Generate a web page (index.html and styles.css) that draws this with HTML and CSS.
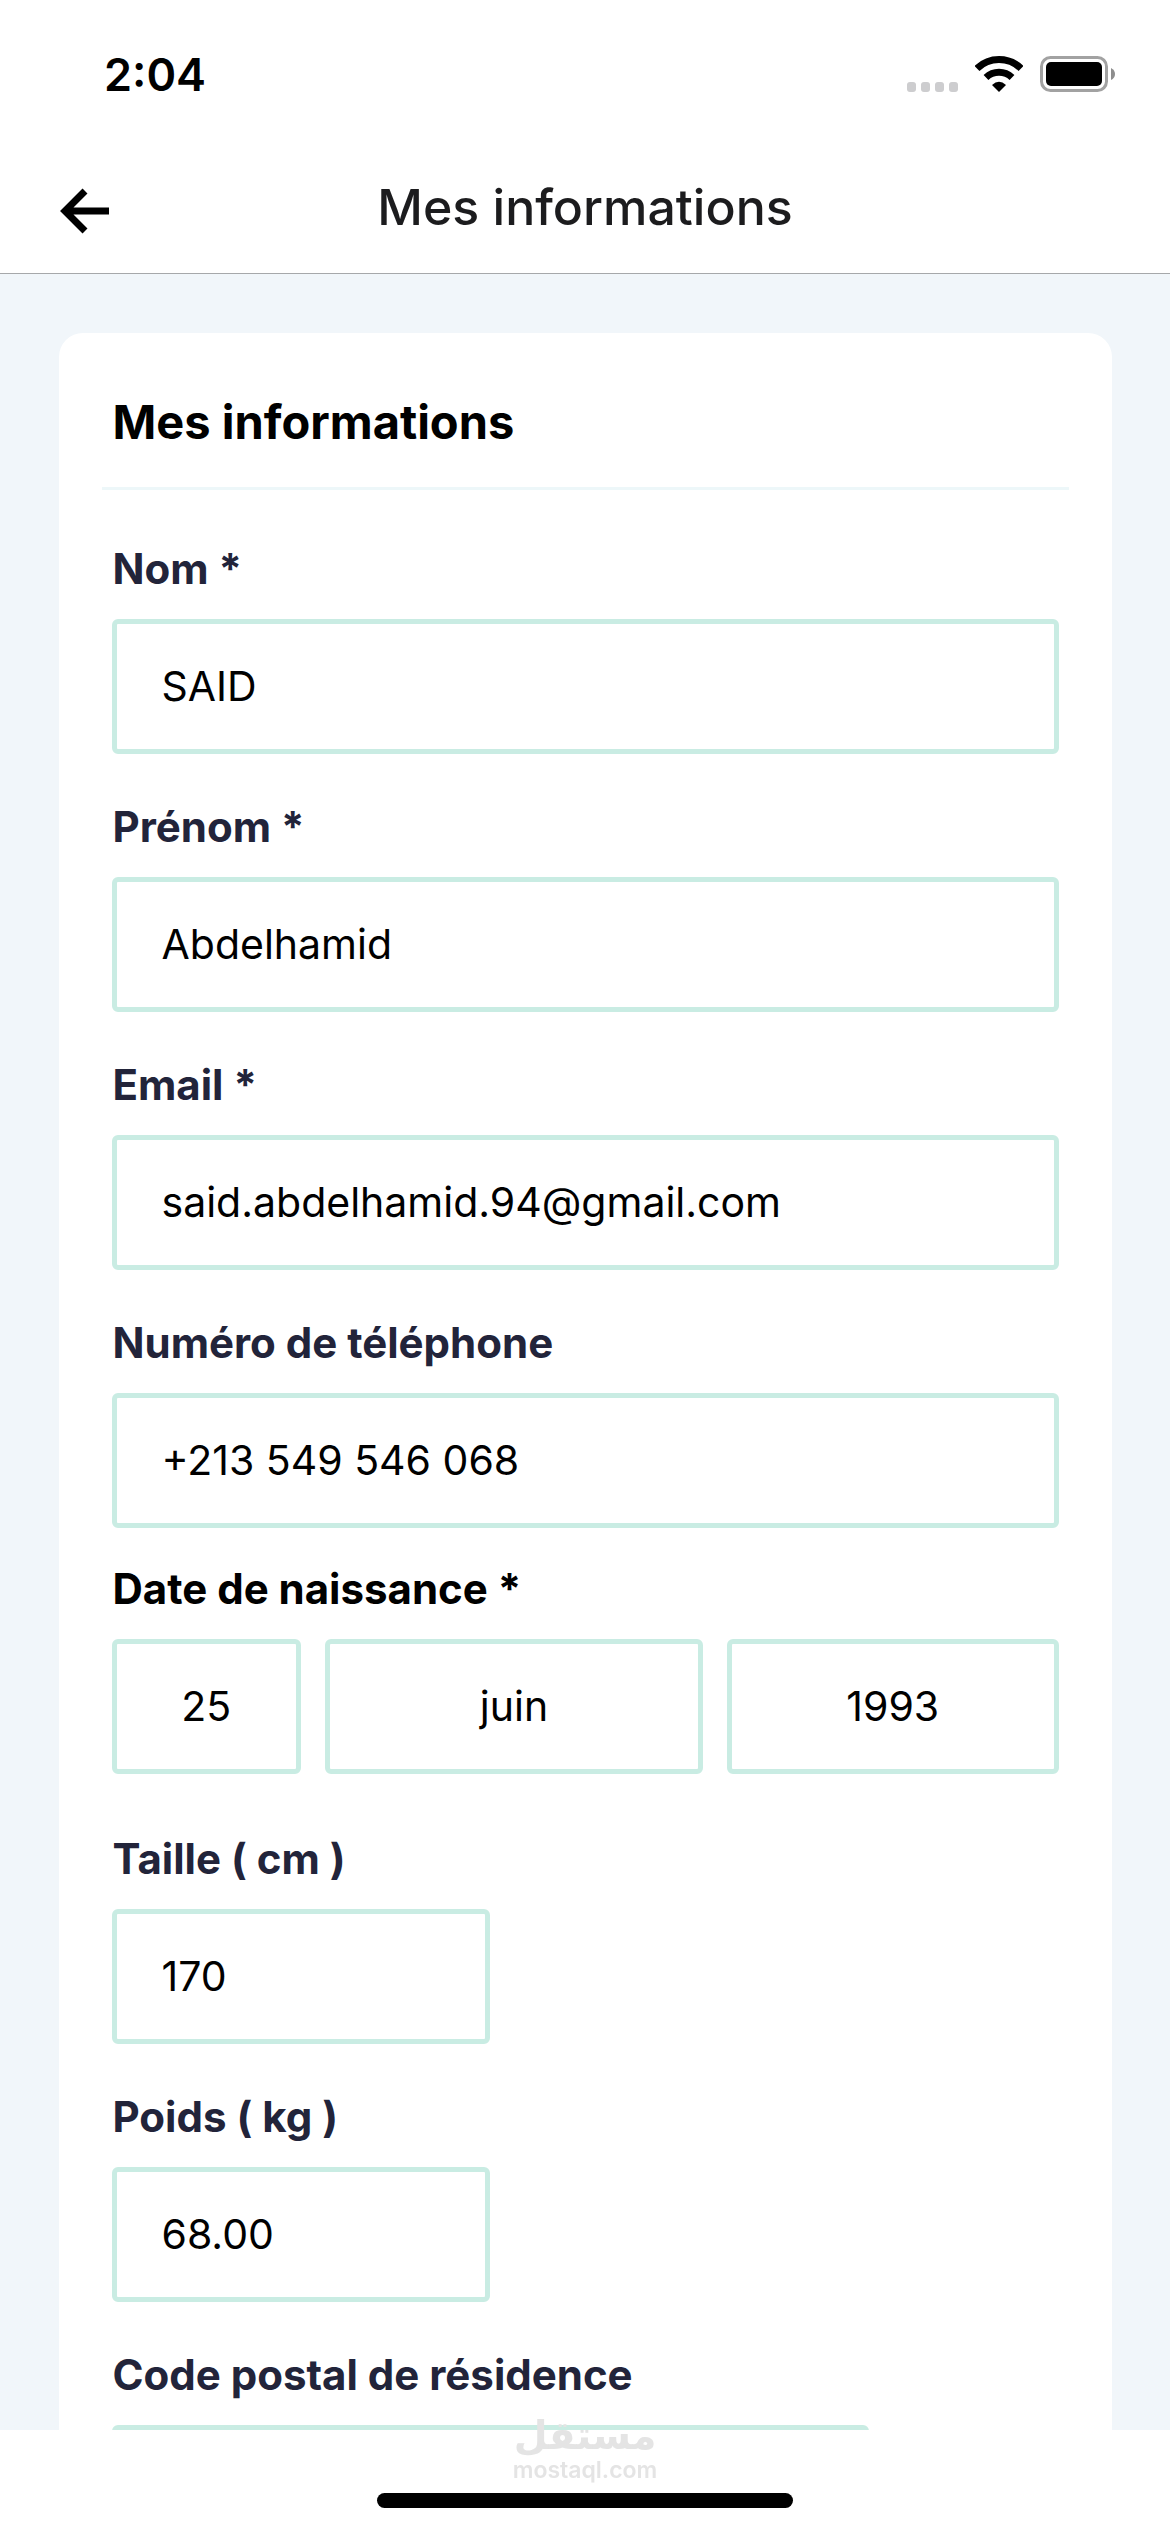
FILE: index.html
```html
<!DOCTYPE html>
<html lang="fr">
<head>
  <meta charset="UTF-8">
  <meta name="viewport" content="width=device-width, initial-scale=1.0">
  <title>Mes informations</title>
  <link rel="stylesheet" href="styles.css">
</head>
<body>

<!-- Status bar -->
<div class="status-bar">
  <span class="time">2:04</span>
  <div class="status-icons">
    <svg width="51" height="38" viewBox="0 0 51 38" fill="#cdcdcf">
      <rect x="0" y="27" width="9" height="10" rx="3"/>
      <rect x="14" y="27" width="9" height="10" rx="3"/>
      <rect x="28" y="27" width="9" height="10" rx="3"/>
      <rect x="42" y="27" width="9" height="10" rx="3"/>
    </svg>
    <svg width="48" height="38" viewBox="0 0 48 38">
      <path d="M2 13.500A31.500 31.500 0 0 1 46 13.500" fill="none" stroke="#000" stroke-width="7"/>
      <path d="M11 22.500A19 19 0 0 1 37 22.500" fill="none" stroke="#000" stroke-width="7"/>
      <path d="M24 37L17 30Q24 23.500 31 30Z"/>
    </svg>
    <svg width="75" height="38" viewBox="0 0 75 38">
      <rect x="1.500" y="2.500" width="65" height="33" rx="9" fill="none" stroke="#a2a2a2" stroke-width="3"/>
      <rect x="6" y="7" width="56" height="24" rx="5"/>
      <path d="M71 13Q75 15 75 19T71 25Z" fill="#8e8e8e"/>
    </svg>
  </div>
</div>

<!-- Header -->
<header class="header">
  <button class="back" type="button" aria-label="Retour">
    <svg width="49" height="46" viewBox="0 0 49 46" fill="none" stroke="#000" stroke-width="7">
      <path d="M49 23H6M25 3L5 23L25 43"/>
    </svg>
  </button>
  <h1>Mes informations</h1>
</header>

<!-- Form -->
<main class="content">
  <form class="card">
    <h2>Mes informations</h2>
    <div class="fields">
      <div class="field">
        <label for="nom">Nom *</label>
        <input type="text" id="nom" value="SAID">
      </div>
      <div class="field">
        <label for="prenom">Prénom *</label>
        <input type="text" id="prenom" value="Abdelhamid">
      </div>
      <div class="field">
        <label for="email">Email *</label>
        <input type="email" id="email" value="said.abdelhamid.94@gmail.com">
      </div>
      <div class="field">
        <label for="telephone">Numéro de téléphone</label>
        <input type="tel" id="telephone" value="+213 549 546 068">
      </div>
      <div class="field birth">
        <label for="jour">Date de naissance *</label>
        <div class="date">
          <select id="jour">
            <option>24</option>
            <option selected>25</option>
            <option>26</option>
          </select>
          <select id="mois" aria-label="Mois">
            <option>mai</option>
            <option selected>juin</option>
            <option>juillet</option>
          </select>
          <select id="annee" aria-label="Année">
            <option>1992</option>
            <option selected>1993</option>
            <option>1994</option>
          </select>
        </div>
      </div>
      <div class="field">
        <label for="taille">Taille ( cm )</label>
        <input type="text" id="taille" class="small" value="170">
      </div>
      <div class="field">
        <label for="poids">Poids ( kg )</label>
        <input type="text" id="poids" class="small" value="68.00">
      </div>
      <div class="field">
        <label for="code-postal">Code postal de résidence</label>
        <input type="text" id="code-postal" class="medium">
      </div>
    </div>
  </form>
</main>

<!-- Bottom area -->
<footer class="bottom">
  <div class="watermark">
    <span class="watermark-ar" lang="ar">مستقل</span>
    <span class="watermark-url">mostaql.com</span>
  </div>
  <div class="home-indicator"></div>
</footer>

</body>
</html>
```

FILE: styles.css
```css
* {
  box-sizing: border-box;
}

body {
  margin: 0;
  height: 100vh;
  display: flex;
  flex-direction: column;
  font-family: Inter, "Liberation Sans", sans-serif;
  font-size: 42px;
  color: #000;
  background-color: #fff;
}

h1, h2 {
  margin: 0;
}

/* Status bar */
.status-bar {
  flex: none;
  display: flex;
  justify-content: space-between;
  align-items: center;
  height: 148px;
  padding: 0 55px 0 104px;
}

.time {
  font-size: 45px;
  font-weight: 600;
}

.status-icons {
  display: flex;
  gap: 17px;
}

/* Header */
.header {
  flex: none;
  display: grid;
  grid-template-columns: 1fr auto 1fr;
  align-items: center;
  height: 126px;
  padding: 0 60px;
  border-bottom: 1px solid #a6a8aa;
}

.header h1 {
  padding-bottom: 8px;
  font-size: 50px;
  font-weight: 500;
  color: #1c1c1e;
}

.back {
  justify-self: start;
  display: flex;
  padding: 0;
  border: none;
  background: none;
  cursor: pointer;
}

/* Form card */
.content {
  flex: 1;
  min-height: 0;
  overflow-y: auto;
  scrollbar-width: none;
  padding: 59px 5%;
  background-color: #f1f6fa;
}

.card {
  padding: 60px 43px;
  border-radius: 24px;
  background-color: #fff;
}

.card h2 {
  padding: 0 11px 36px;
  border-bottom: 3px solid #edf7f9;
  font-size: 47px;
  line-height: 58px;
  font-weight: 700;
}

.fields {
  display: flex;
  flex-direction: column;
  gap: 48px;
  padding: 54px 10px 0;
}

.field {
  display: flex;
  flex-direction: column;
  gap: 25px;
}

.field label {
  padding-left: 1px;
  line-height: 50px;
  font-weight: 700;
  color: #22243a;
}

.field input,
.field select {
  width: 100%;
  height: 135px;
  padding: 0 45px 2px;
  border: 5px solid #c9ece3;
  border-radius: 6px;
  background-color: #fff;
  font-family: inherit;
  font-size: 41px;
  color: #000;
}

.field select {
  appearance: none;
  padding: 0 0 2px;
  text-align: center;
}

.field .small {
  width: 40%;
}

.field .medium {
  width: 80%;
}

.field.birth {
  margin: -12px 0 12px;
}

.field.birth label {
  color: #000;
}

.date {
  display: flex;
  justify-content: space-between;
}

.date #jour {
  width: 20%;
}

.date #mois {
  width: 40%;
}

.date #annee {
  width: 35%;
}

/* Bottom area */
.bottom {
  position: relative;
  flex: none;
  display: flex;
  justify-content: center;
  align-items: flex-end;
  height: 102px;
  padding-bottom: 24px;
}

.home-indicator {
  width: 416px;
  height: 15px;
  border-radius: 8px;
  background-color: #000;
}

.watermark {
  position: absolute;
  bottom: 48px;
  left: 50%;
  transform: translateX(-50%);
  display: flex;
  flex-direction: column;
  align-items: center;
  font-weight: 600;
  color: #e4e4e4;
}

.watermark-ar {
  font-family: "DejaVu Sans", sans-serif;
  font-size: 39px;
  line-height: 40px;
  font-weight: 700;
}

.watermark-url {
  font-size: 23px;
  line-height: 28px;
}
```
